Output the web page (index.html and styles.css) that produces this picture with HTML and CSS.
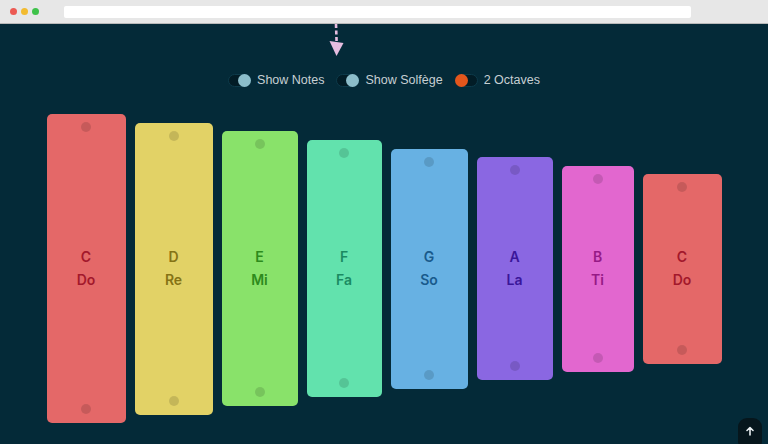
FILE: index.html
```html
<!DOCTYPE html>
<html lang="en">
<head>
<meta charset="utf-8">
<title>Xylophone</title>
<link rel="stylesheet" href="styles.css">
</head>
<body>
<div class="chrome">
  <div class="lights">
    <span class="light red"></span>
    <span class="light yellow"></span>
    <span class="light green"></span>
  </div>
  <div class="address"></div>
</div>
<main class="page">
  <div class="hint">
    <svg width="20" height="34" viewBox="0 0 20 34">
      <path d="M9 0 L9.6 18" stroke="#e6bde0" stroke-width="2.6" stroke-dasharray="4 2.5" fill="none"/>
      <path d="M2.5 17 L16.5 19 L9.5 32 Z" fill="#e6bde0"/>
    </svg>
  </div>
  <div class="controls">
    <label class="toggle"><span class="track on"><span class="knob"></span></span><span class="text">Show Notes</span></label>
    <label class="toggle"><span class="track on"><span class="knob"></span></span><span class="text">Show Solfège</span></label>
    <label class="toggle"><span class="track off"><span class="knob orange"></span></span><span class="text">2 Octaves</span></label>
  </div>
  <div class="bars">
    <div class="bar b1"><span class="dot"></span><div class="label"><span>C</span><span>Do</span></div><span class="dot"></span></div>
    <div class="bar b2"><span class="dot"></span><div class="label"><span>D</span><span>Re</span></div><span class="dot"></span></div>
    <div class="bar b3"><span class="dot"></span><div class="label"><span>E</span><span>Mi</span></div><span class="dot"></span></div>
    <div class="bar b4"><span class="dot"></span><div class="label"><span>F</span><span>Fa</span></div><span class="dot"></span></div>
    <div class="bar b5"><span class="dot"></span><div class="label"><span>G</span><span>So</span></div><span class="dot"></span></div>
    <div class="bar b6"><span class="dot"></span><div class="label"><span>A</span><span>La</span></div><span class="dot"></span></div>
    <div class="bar b7"><span class="dot"></span><div class="label"><span>B</span><span>Ti</span></div><span class="dot"></span></div>
    <div class="bar b8"><span class="dot"></span><div class="label"><span>C</span><span>Do</span></div><span class="dot"></span></div>
  </div>
  <button class="to-top" aria-label="Back to top">
    <svg width="10" height="10" viewBox="0 0 10 10"><path d="M5 9 V2 M2 4.5 L5 1.5 L8 4.5" stroke="#e8eef0" stroke-width="1.6" fill="none" stroke-linecap="round" stroke-linejoin="round"/></svg>
  </button>
</main>
</body>
</html>
```

FILE: styles.css
```css
* { box-sizing: border-box; }
html, body { margin: 0; padding: 0; }
body {
  width: 768px;
  height: 444px;
  overflow: hidden;
  background: #042a38;
  font-family: "Liberation Sans", Arial, sans-serif;
}
.chrome {
  height: 24px;
  background: #e7e7e7;
  border-bottom: 1px solid #b9b9b9;
  display: flex;
  align-items: center;
  padding-left: 10px;
}
.lights { display: flex; gap: 4px; }
.light { width: 7px; height: 7px; border-radius: 50%; display: block; }
.light.red { background: #ec5a53; }
.light.yellow { background: #f2bb30; }
.light.green { background: #3ec24a; }
.address {
  margin-left: 25px;
  width: 627px;
  height: 12px;
  background: #ffffff;
  border-radius: 2px;
}
.page {
  position: relative;
  height: 420px;
  display: flex;
  flex-direction: column;
  align-items: center;
}
.hint {
  height: 34px;
  width: 20px;
  margin-left: -94px;
}
.hint svg { display: block; }
.controls {
  margin-top: 12px;
  height: 20px;
  display: flex;
  align-items: center;
  gap: 12px;
  color: #c7cfd3;
  font-size: 12.5px;
}
.toggle { display: flex; align-items: center; gap: 6px; }
.track {
  width: 23px;
  height: 13px;
  border-radius: 7px;
  background: #021c26;
  border: 1px solid #0d3a4a;
  display: flex;
  align-items: center;
}
.track.on { justify-content: flex-end; }
.track.off { justify-content: flex-start; }
.knob {
  width: 13px;
  height: 13px;
  border-radius: 50%;
  background: #8cbdca;
  margin: 0 -1px;
}
.knob.orange { background: #e4561c; }
.bars {
  margin-top: 24px;
  height: 309px;
  display: flex;
  align-items: center;
  gap: 9px;
}
.bar {
  border-radius: 5px;
  display: flex;
  flex-direction: column;
  align-items: center;
  justify-content: space-between;
  padding: 8px 0 9px;
  font-family: Inter, "Open Sans", sans-serif;
  font-weight: 600;
  font-size: 14px;
}
.dot {
  width: 10px;
  height: 10px;
  border-radius: 50%;
  background: rgba(0, 0, 0, 0.13);
  display: block;
}
.label {
  display: flex;
  flex-direction: column;
  align-items: center;
  line-height: 23px;
}
.b1 { width: 79px; height: 309px; background: #e46868; color: #a3182c; }
.b2 { width: 78px; height: 292px; background: #e2d266; color: #857315; }
.b3 { width: 76px; height: 275px; background: #89e26a; color: #2d8a1c; }
.b4 { width: 75px; height: 257px; background: #62e2ad; color: #1b8a62; }
.b5 { width: 77px; height: 240px; background: #67b1e3; color: #195a8c; }
.b6 { width: 76px; height: 223px; background: #8a67e2; color: #3a1699; }
.b7 { width: 72px; height: 206px; background: #e267cf; color: #961a86; }
.b8 { width: 79px; height: 190px; background: #e46868; color: #a3182c; }
.to-top {
  position: absolute;
  right: 6px;
  bottom: -6px;
  width: 24px;
  height: 32px;
  border: none;
  border-radius: 9px;
  background: #06161c;
  display: flex;
  align-items: flex-start;
  justify-content: center;
  padding-top: 8px;
}
.to-top svg { display: block; }
```
